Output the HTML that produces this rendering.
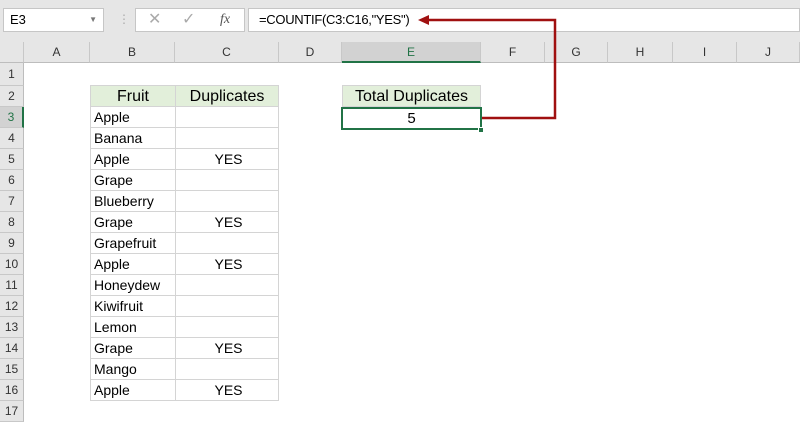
<!DOCTYPE html><html><head><style>
body{margin:0;width:800px;height:421px;overflow:hidden;background:#fff;font-family:"Liberation Sans",sans-serif;position:relative}
div{position:absolute;box-sizing:border-box}
.hd{top:42px;height:21px;background:#e6e6e6;border-right:1px solid #c8c8c8;border-bottom:1px solid #bdbdbd;text-align:center;font-size:12px;line-height:20px;color:#333}
.rh{left:0;width:24px;height:21px;background:#e6e6e6;border-bottom:1px solid #c8c8c8;border-right:1px solid #bdbdbd;text-align:center;font-size:12px;line-height:21px;color:#333}
.c{height:22px;border:1px solid #d4d4d4;font-size:14px;line-height:21px;padding-left:3px;color:#000}
.g{background:#e2efda;font-size:16px;text-align:center;padding:0}
</style></head><body>
<div style="left:0;top:0;width:800px;height:42px;background:#e6e6e6"></div>
<div style="left:3px;top:8px;width:101px;height:24px;background:#fff;border:1px solid #c6c6c6;font-size:13px;line-height:22px;padding-left:6px">E3<span style="position:absolute;right:6px;top:0;font-size:8px;color:#777">▼</span></div>
<div style="left:118px;top:12px;color:#aaa;font-size:12px">⋮</div>
<div style="left:135px;top:8px;width:110px;height:24px;background:#fff;border:1px solid #c6c6c6;color:#aaa;font-size:16px;line-height:22px"><span style="position:absolute;left:12px">✕</span><span style="position:absolute;left:46px">✓</span><span style="position:absolute;left:84px;font-style:italic;font-family:'Liberation Serif',serif;color:#555;font-size:14px">fx</span></div>
<div style="left:248px;top:8px;width:552px;height:24px;background:#fff;border:1px solid #c6c6c6;font-size:13px;letter-spacing:-0.3px;line-height:22px;padding-left:10px">=COUNTIF(C3:C16,"YES")</div>
<div class="hd" style="left:0;width:24px"></div>
<div class="hd" style="left:24px;width:66px">A</div>
<div class="hd" style="left:90px;width:85px">B</div>
<div class="hd" style="left:175px;width:104px">C</div>
<div class="hd" style="left:279px;width:63px">D</div>
<div class="hd" style="left:342px;width:139px;background:#d2d2d2;border-bottom:2px solid #217346;color:#217346">E</div>
<div class="hd" style="left:481px;width:64px">F</div>
<div class="hd" style="left:545px;width:63px">G</div>
<div class="hd" style="left:608px;width:65px">H</div>
<div class="hd" style="left:673px;width:64px">I</div>
<div class="hd" style="left:737px;width:63px">J</div>
<div class="rh" style="top:63px;height:23px;line-height:23px">1</div>
<div class="rh" style="top:86px">2</div>
<div class="rh" style="top:107px;background:#d2d2d2;border-right:2px solid #217346;color:#217346">3</div>
<div class="rh" style="top:128px">4</div><div class="rh" style="top:149px">5</div><div class="rh" style="top:170px">6</div><div class="rh" style="top:191px">7</div><div class="rh" style="top:212px">8</div><div class="rh" style="top:233px">9</div><div class="rh" style="top:254px">10</div><div class="rh" style="top:275px">11</div><div class="rh" style="top:296px">12</div><div class="rh" style="top:317px">13</div><div class="rh" style="top:338px">14</div><div class="rh" style="top:359px">15</div><div class="rh" style="top:380px">16</div><div class="rh" style="top:401px">17</div>
<div class="c g" style="left:90px;top:85px;width:86px">Fruit</div>
<div class="c g" style="left:175px;top:85px;width:104px">Duplicates</div>
<div class="c" style="left:90px;top:106px;width:86px">Apple</div><div class="c" style="left:175px;top:106px;width:104px"></div>
<div class="c" style="left:90px;top:127px;width:86px">Banana</div><div class="c" style="left:175px;top:127px;width:104px"></div>
<div class="c" style="left:90px;top:148px;width:86px">Apple</div><div class="c" style="left:175px;top:148px;width:104px;text-align:center">YES</div>
<div class="c" style="left:90px;top:169px;width:86px">Grape</div><div class="c" style="left:175px;top:169px;width:104px"></div>
<div class="c" style="left:90px;top:190px;width:86px">Blueberry</div><div class="c" style="left:175px;top:190px;width:104px"></div>
<div class="c" style="left:90px;top:211px;width:86px">Grape</div><div class="c" style="left:175px;top:211px;width:104px;text-align:center">YES</div>
<div class="c" style="left:90px;top:232px;width:86px">Grapefruit</div><div class="c" style="left:175px;top:232px;width:104px"></div>
<div class="c" style="left:90px;top:253px;width:86px">Apple</div><div class="c" style="left:175px;top:253px;width:104px;text-align:center">YES</div>
<div class="c" style="left:90px;top:274px;width:86px">Honeydew</div><div class="c" style="left:175px;top:274px;width:104px"></div>
<div class="c" style="left:90px;top:295px;width:86px">Kiwifruit</div><div class="c" style="left:175px;top:295px;width:104px"></div>
<div class="c" style="left:90px;top:316px;width:86px">Lemon</div><div class="c" style="left:175px;top:316px;width:104px"></div>
<div class="c" style="left:90px;top:337px;width:86px">Grape</div><div class="c" style="left:175px;top:337px;width:104px;text-align:center">YES</div>
<div class="c" style="left:90px;top:358px;width:86px">Mango</div><div class="c" style="left:175px;top:358px;width:104px"></div>
<div class="c" style="left:90px;top:379px;width:86px">Apple</div><div class="c" style="left:175px;top:379px;width:104px;text-align:center">YES</div>
<div class="c g" style="left:342px;top:85px;width:139px">Total Duplicates</div>
<div style="left:341px;top:107px;width:141px;height:23px;border:2px solid #217346;text-align:center;font-size:15px;line-height:19px">5</div>
<div style="left:478px;top:127px;width:6px;height:6px;background:#217346;border:1px solid #fff"></div>
<svg style="position:absolute;left:0;top:0" width="800" height="421"><path d="M482 118 H555 V20 H426" fill="none" stroke="#a01010" stroke-width="2.5"/><path d="M418 20 L429 15 L429 25 Z" fill="#a01010"/></svg>
</body></html>
